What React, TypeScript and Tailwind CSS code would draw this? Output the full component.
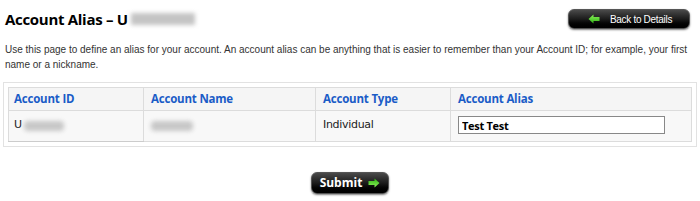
import React from 'react'

function GreenArrow({ dir }: { dir: 'left' | 'right' }) {
  return (
    <svg width="12" height="10" viewBox="0 0 12 10" className={dir === 'left' ? '' : 'rotate-180'}>
      <defs>
        <linearGradient id={`ga-${dir}`} x1="0" y1="0" x2="0" y2="1">
          <stop offset="0" stopColor="#8cf25a" />
          <stop offset="1" stopColor="#2fb214" />
        </linearGradient>
      </defs>
      <path d="M0.5 5 L5.5 0.5 L5.5 3 L11.5 3 L11.5 7 L5.5 7 L5.5 9.5 Z" fill={`url(#ga-${dir})`} />
    </svg>
  )
}

function DarkButton({ children, className }: { children: React.ReactNode; className?: string }) {
  return (
    <button
      className={`flex items-center justify-center rounded-[6px] border border-[#555] bg-gradient-to-b from-[#4a4a4a] via-[#1c1c1c] to-[#000] text-white shadow-[0_1px_2px_rgba(0,0,0,0.5)] ${className ?? ''}`}
    >
      {children}
    </button>
  )
}

function Blur({ w }: { w: number }) {
  return <span className="inline-block h-[10px] rounded-sm bg-[#c8c8c8] blur-[2px]" style={{ width: w }} />
}

export default function App() {
  return (
    <div className="h-[201px] w-[700px] bg-white font-['Liberation_Sans',Arial,sans-serif] text-[#222]">
      <div className="flex items-center justify-between pl-[5px] pr-[10px] pt-[8px]">
        <h1 className="flex items-center font-['Open_Sans',sans-serif] text-[15px] font-bold tracking-[-0.3px] text-black">
          Account Alias – U
          <span className="ml-[3px] inline-block h-[12px] w-[64px] bg-[#c4c4c4] blur-[2px]" />
        </h1>
        <DarkButton className="h-[20px] w-[122px] gap-[10px] pl-[2px] text-[10px] tracking-[-0.3px]">
          <GreenArrow dir="left" />
          <span>Back to Details</span>
        </DarkButton>
      </div>

      <p className="mt-[11px] px-[5px] text-[10px] leading-[15px] text-[#333]">
        Use this page to define an alias for your account. An account alias can be anything that is easier to
        remember than your Account ID; for example, your first name or a nickname.
      </p>

      <div className="mx-[3px] mt-[10px] border border-[#e2e2e2] p-[4px]">
        <table className="w-full border-collapse font-['DejaVu_Sans',sans-serif] text-[11px]">
          <thead>
            <tr className="h-[23px] bg-[#f5f5f5] text-left font-['Open_Sans',sans-serif] text-[11.5px] font-bold tracking-[-0.2px] text-[#1a5cc7]">
              <th className="w-[135px] border border-[#dcdcdc] px-[5px]">Account ID</th>
              <th className="w-[172px] border border-[#dcdcdc] px-[7px]">Account Name</th>
              <th className="w-[135px] border border-[#dcdcdc] px-[7px]">Account Type</th>
              <th className="border border-[#dcdcdc] px-[7px]">Account Alias</th>
            </tr>
          </thead>
          <tbody>
            <tr className="h-[31px] bg-[#f8f8f8] tracking-[-0.3px] text-[#222]">
              <td className="border border-[#dcdcdc] border-b-dashed border-b-[#ccc] px-[5px]">
                <span className="flex items-center gap-[2px]">
                  U<Blur w={40} />
                </span>
              </td>
              <td className="border border-[#dcdcdc] px-[7px]">
                <span className="flex items-center">
                  <Blur w={42} />
                </span>
              </td>
              <td className="border border-[#dcdcdc] px-[7px]">Individual</td>
              <td className="border border-[#dcdcdc] px-[7px]">
                <input
                  defaultValue="Test Test"
                  className="h-[18px] w-[207px] border border-[#888] bg-white px-[3px] font-['Open_Sans',sans-serif] text-[11px] font-bold text-black outline-none"
                />
              </td>
            </tr>
          </tbody>
        </table>
      </div>

      <div className="mt-[25px] flex justify-center">
        <DarkButton className="h-[22px] w-[78px] gap-[6px] font-['Open_Sans',sans-serif] text-[12px] font-bold">
          <span>Submit</span>
          <GreenArrow dir="right" />
        </DarkButton>
      </div>
    </div>
  )
}
